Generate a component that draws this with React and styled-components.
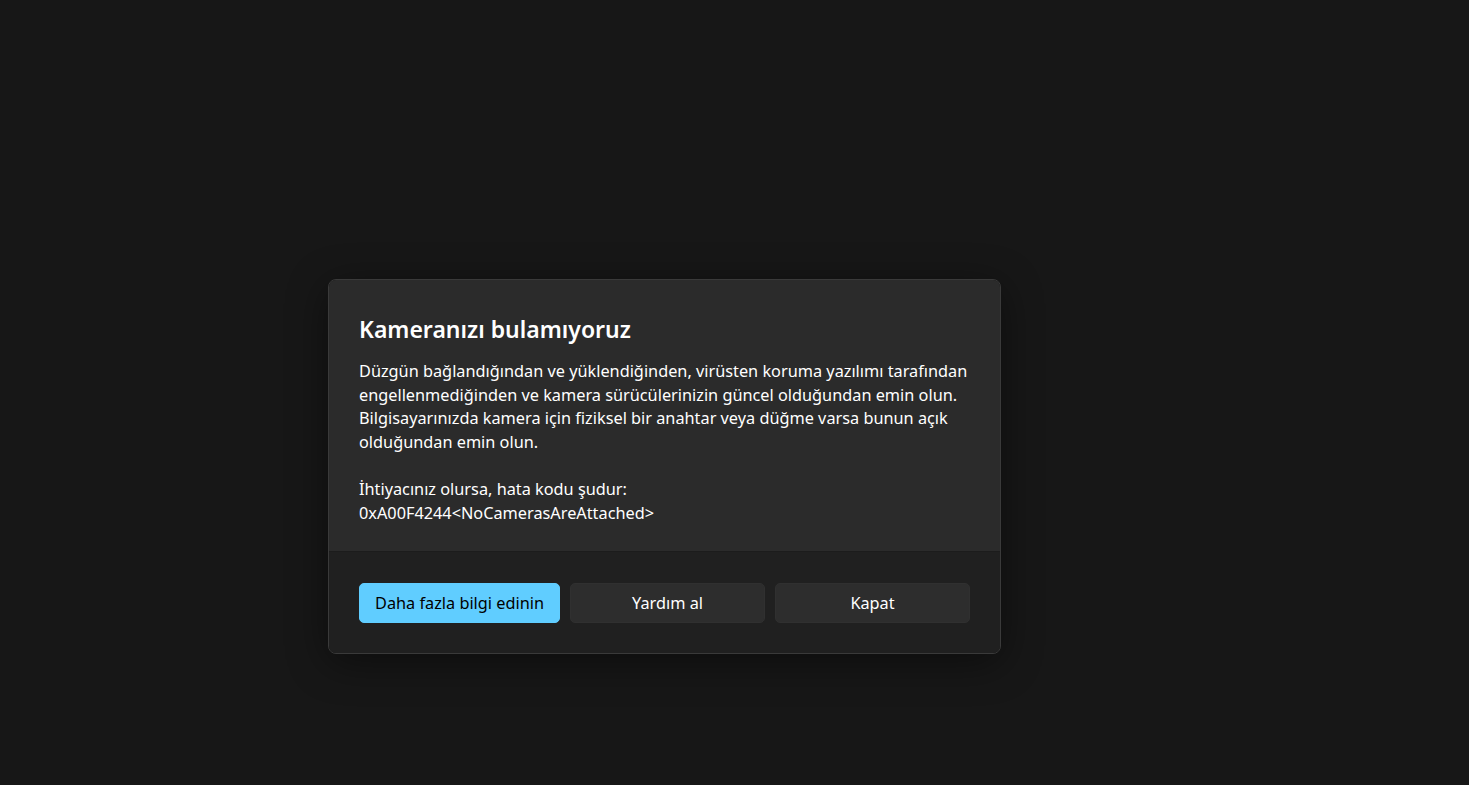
import React from 'react'
import styled, { createGlobalStyle } from 'styled-components'

const GlobalStyle = createGlobalStyle`
    html, body {
        margin: 0;
        padding: 0;
        background: #171717;
    }
    body {
        font-family: "Noto Sans", "Open Sans", sans-serif;
    }
`

const Screen = styled.div`
    width: 100vw;
    height: 100vh;
    display: flex;
    align-items: flex-start;
    justify-content: flex-start;
    padding: 279px 0 0 328px;
    box-sizing: border-box;
`

const Dialog = styled.div`
    width: 673px;
    border: 1px solid #3a3a3a;
    border-radius: 8px;
    overflow: hidden;
    box-sizing: border-box;
    box-shadow: 0 8px 40px rgba(0, 0, 0, 0.45);
`

const Body = styled.div`
    background: #2b2b2b;
    padding: 33px 30px 26px 30px;
    color: #ffffff;
`

const Title = styled.h1`
    margin: 0 0 15px 0;
    font-size: 23px;
    font-weight: 600;
    line-height: 32px;
    color: #ffffff;
`

const Text = styled.p`
    margin: 0;
    font-size: 16.3px;
    line-height: 23.6px;
    white-space: nowrap;
    color: #ffffff;
`

const Footer = styled.div`
    background: #202020;
    border-top: 1px solid #1c1c1c;
    padding: 31px 30px 30px 30px;
    display: grid;
    grid-template-columns: 201px 1fr 1fr;
    gap: 10px;
`

const Button = styled.button`
    height: 40px;
    border-radius: 5px;
    border: 1px solid ${p => p.primary ? '#60cdff' : '#303030'};
    background: ${p => p.primary ? '#60cdff' : '#2d2d2d'};
    color: ${p => p.primary ? '#000000' : '#ffffff'};
    font-family: inherit;
    font-size: 16.3px;
    cursor: pointer;
`

export default function App() {
    return (
        <>
            <GlobalStyle />
            <Screen>
                <Dialog>
                    <Body>
                        <Title>Kameranızı bulamıyoruz</Title>
                        <Text>
                            Düzgün bağlandığından ve yüklendiğinden, virüsten koruma yazılımı tarafından<br />
                            engellenmediğinden ve kamera sürücülerinizin güncel olduğundan emin olun.<br />
                            Bilgisayarınızda kamera için fiziksel bir anahtar veya düğme varsa bunun açık<br />
                            olduğundan emin olun.<br />
                            <br />
                            İhtiyacınız olursa, hata kodu şudur:<br />
                            0xA00F4244&lt;NoCamerasAreAttached&gt;
                        </Text>
                    </Body>
                    <Footer>
                        <Button primary>Daha fazla bilgi edinin</Button>
                        <Button>Yardım al</Button>
                        <Button>Kapat</Button>
                    </Footer>
                </Dialog>
            </Screen>
        </>
    )
}
